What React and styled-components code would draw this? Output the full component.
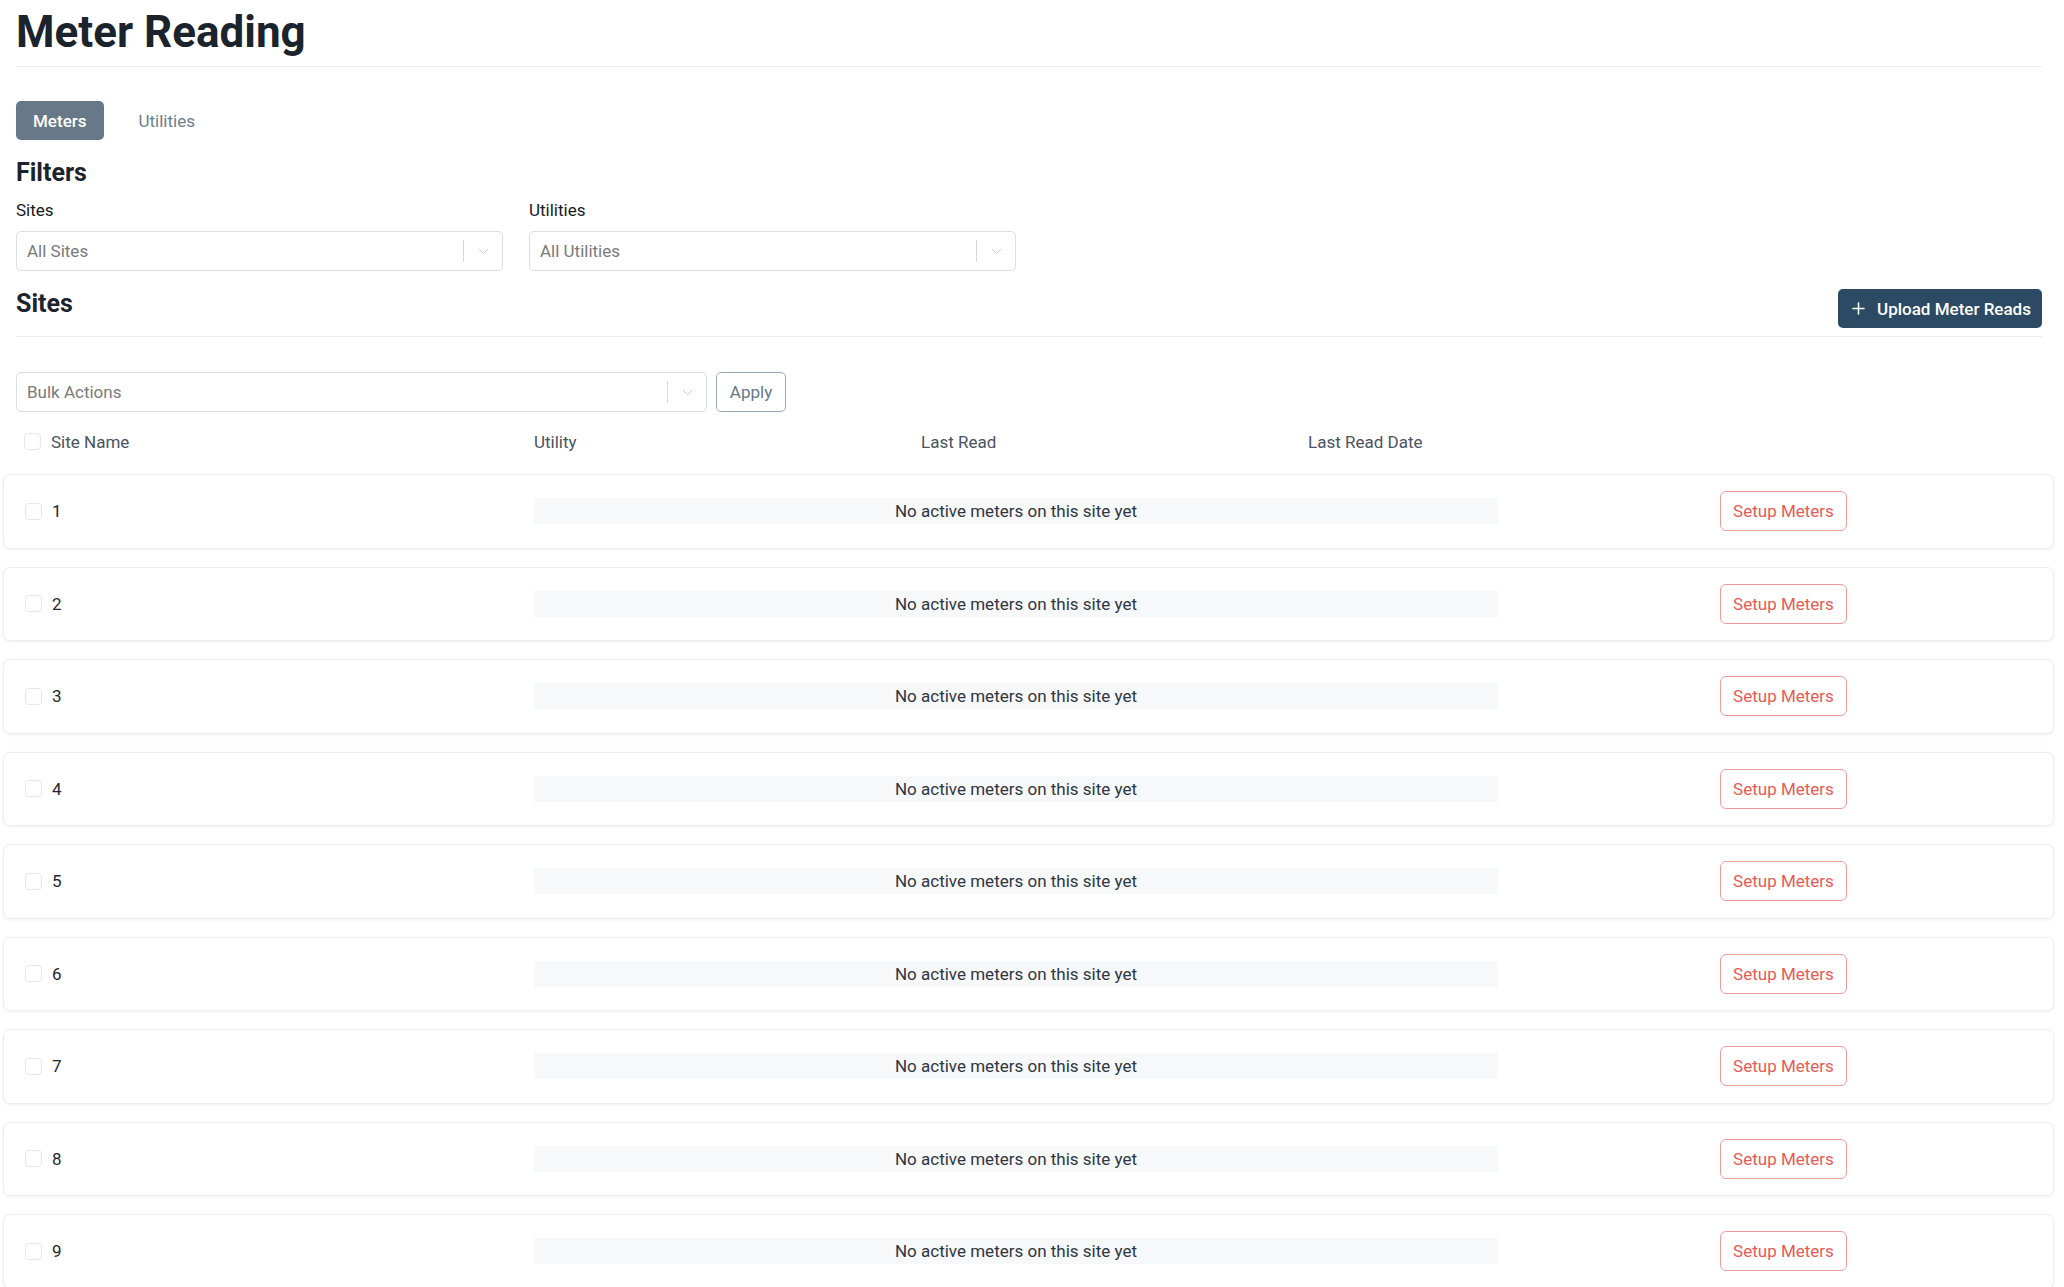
import React from "react";
import styled, { createGlobalStyle } from "styled-components";
import { ChevronDown, Plus } from "lucide-react";

const GlobalStyle = createGlobalStyle`
  html, body {
    margin: 0;
    padding: 0;
    background: #ffffff;
    font-family: Roboto, "Liberation Sans", Arial, sans-serif;
    color: #1f2937;
    overflow: hidden;
  }
  * { box-sizing: border-box; }
`;

// --- Page shell ---
const Page = styled.div`
  padding: 5px 22px 0 16px;
`;

const PageHeader = styled.header`
  padding-bottom: 7px;
  border-bottom: 1px solid #ebebf2;
`;

const Title = styled.h1`
  margin: 0;
  font-size: 44px;
  line-height: 54px;
  font-weight: 700;
  color: #1b232d;
`;

// --- Tabs ---
const Tabs = styled.nav`
  display: flex;
  gap: 18px;
  margin-top: 34px;
`;

const Tab = styled.button`
  height: 39px;
  padding: 0 17px;
  border: none;
  border-radius: 5px;
  font-family: inherit;
  font-size: 17px;
  font-weight: ${(p) => (p.$active ? 500 : 400)};
  cursor: pointer;
  background: ${(p) => (p.$active ? "#677889" : "transparent")};
  color: ${(p) => (p.$active ? "#ffffff" : "#6b7d8f")};
`;

// --- Section headings ---
const SectionTitle = styled.h2`
  margin: 0;
  font-size: 25px;
  line-height: 30px;
  font-weight: 700;
  color: #1b232d;
`;

const FiltersBlock = styled.section`
  margin-top: 18px;
`;

const FilterRow = styled.div`
  display: flex;
  gap: 26px;
  margin-top: 12px;
`;

const Field = styled.div`
  display: flex;
  flex-direction: column;
  gap: 11px;
  width: 487px;
`;

const Label = styled.label`
  font-size: 17px;
  line-height: 20px;
  font-weight: 400;
  color: #161b22;
`;

// --- Select (react-select look) ---
const SelectBox = styled.div`
  display: flex;
  align-items: center;
  height: 40px;
  width: ${(p) => p.$width || "100%"};
  border: 1px solid #dddddd;
  border-radius: 5px;
  background: #fff;
`;

const SelectValue = styled.span`
  flex: 1;
  padding-left: 10px;
  font-size: 17px;
  color: #7a7a7a;
`;

const SelectSep = styled.span`
  width: 1px;
  height: 22px;
  background: #d6d6d6;
`;

const SelectArrow = styled.span`
  width: 38px;
  display: flex;
  align-items: center;
  justify-content: center;
  color: #c4c4c4;
`;

function Select({ value, width }) {
  return (
    <SelectBox $width={width}>
      <SelectValue>{value}</SelectValue>
      <SelectSep />
      <SelectArrow>
        <ChevronDown size={17} strokeWidth={1.4} />
      </SelectArrow>
    </SelectBox>
  );
}

// --- Sites section ---
const SitesHeader = styled.div`
  display: flex;
  justify-content: space-between;
  align-items: flex-start;
  margin-top: 18px;
  padding-bottom: 8px;
  border-bottom: 1px solid #ebebf2;
`;

const UploadButton = styled.button`
  display: flex;
  align-items: center;
  justify-content: center;
  gap: 9px;
  width: 204px;
  height: 39px;
  padding: 0;
  border: none;
  border-radius: 5px;
  background: #2c4a63;
  color: #ffffff;
  font-family: inherit;
  font-size: 17px;
  font-weight: 500;
  cursor: pointer;
`;

const BulkRow = styled.div`
  display: flex;
  gap: 9px;
  margin-top: 35px;
`;

const ApplyButton = styled.button`
  height: 40px;
  width: 70px;
  border: 1px solid #9aa7b5;
  border-radius: 5px;
  background: #fff;
  color: #66788a;
  font-family: inherit;
  font-size: 17px;
  cursor: pointer;
`;

// --- Table ---
const HeadRow = styled.div`
  display: grid;
  grid-template-columns: 510px 387px 387px 1fr;
  align-items: center;
  height: 35px;
  margin-top: 12px;
  padding-left: 8px;
  font-size: 17px;
  color: #4a5360;
`;

const NameCell = styled.div`
  display: flex;
  align-items: center;
  gap: 10px;
`;

const Check = styled.span`
  display: inline-block;
  width: 17px;
  height: 17px;
  border: 1px solid #e4e7eb;
  border-radius: 4px;
  background: #fff;
`;

const List = styled.div`
  display: flex;
  flex-direction: column;
  gap: 18px;
  margin: 15px -12px 0 -13px;
`;

const Card = styled.div`
  display: grid;
  grid-template-columns: 509px 964px 1fr;
  align-items: center;
  flex: 0 0 auto;
  height: 74.5px;
  padding-left: 21px;
  border: 1px solid #eceef2;
  border-radius: 7px;
  background: #fff;
  box-shadow: 0 1px 3px rgba(0, 0, 0, 0.06);
`;

const SiteNumber = styled.span`
  font-size: 17px;
  color: #1f2630;
`;

const EmptyBar = styled.div`
  height: 26px;
  display: flex;
  align-items: center;
  justify-content: center;
  background: #f7f8fa;
  font-size: 17px;
  color: #2f3640;
`;

const ActionCell = styled.div`
  padding-left: 222px;
`;

const SetupButton = styled.button`
  height: 40px;
  width: 127px;
  border: 1px solid #f19c9a;
  border-radius: 6px;
  background: #fff;
  color: #ea5a55;
  font-family: inherit;
  font-size: 17px;
  cursor: pointer;
`;

const sites = [1, 2, 3, 4, 5, 6, 7, 8, 9];

export default function App() {
  return (
    <>
      <GlobalStyle />
      <Page>
        <PageHeader>
          <Title>Meter Reading</Title>
        </PageHeader>

        <Tabs>
          <Tab $active>Meters</Tab>
          <Tab>Utilities</Tab>
        </Tabs>

        <FiltersBlock>
          <SectionTitle>Filters</SectionTitle>
          <FilterRow>
            <Field>
              <Label>Sites</Label>
              <Select value="All Sites" />
            </Field>
            <Field>
              <Label>Utilities</Label>
              <Select value="All Utilities" />
            </Field>
          </FilterRow>
        </FiltersBlock>

        <SitesHeader>
          <SectionTitle>Sites</SectionTitle>
          <UploadButton>
            <Plus size={19} strokeWidth={2} />
            Upload Meter Reads
          </UploadButton>
        </SitesHeader>

        <BulkRow>
          <Select value="Bulk Actions" width="691px" />
          <ApplyButton>Apply</ApplyButton>
        </BulkRow>

        <HeadRow>
          <NameCell>
            <Check />
            Site Name
          </NameCell>
          <div>Utility</div>
          <div>Last Read</div>
          <div>Last Read Date</div>
        </HeadRow>

        <List>
          {sites.map((n) => (
            <Card key={n}>
              <NameCell>
                <Check />
                <SiteNumber>{n}</SiteNumber>
              </NameCell>
              <EmptyBar>No active meters on this site yet</EmptyBar>
              <ActionCell>
                <SetupButton>Setup Meters</SetupButton>
              </ActionCell>
            </Card>
          ))}
        </List>
      </Page>
    </>
  );
}
